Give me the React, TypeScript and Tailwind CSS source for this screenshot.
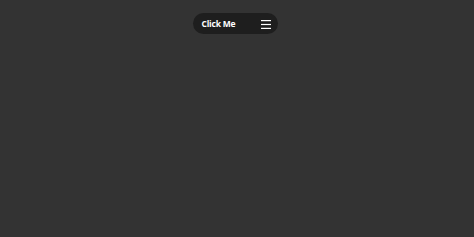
import React from 'react';

export default function App() {
  return (
    <div className="min-h-screen w-full bg-[#333333] flex justify-center pt-[13px] pr-[4px]" style={{ fontFamily: '"Open Sans", sans-serif' }}>
      <button className="h-[21px] w-[85px] rounded-full bg-[#1e1e1e] flex items-center justify-between pl-[9px] pr-[7px]">
        <span className="text-[8.5px] font-bold text-white leading-none tracking-[-0.2px] mt-[2px]">Click Me</span>
        <svg width="10" height="10" viewBox="0 0 10 10" className="text-white mt-[1px]">
          <rect x="0" y="1" width="10" height="1.2" fill="currentColor" />
          <rect x="0" y="4.9" width="10" height="1.2" fill="currentColor" />
          <rect x="0" y="8.8" width="10" height="1.2" fill="currentColor" />
        </svg>
      </button>
    </div>
  );
}
